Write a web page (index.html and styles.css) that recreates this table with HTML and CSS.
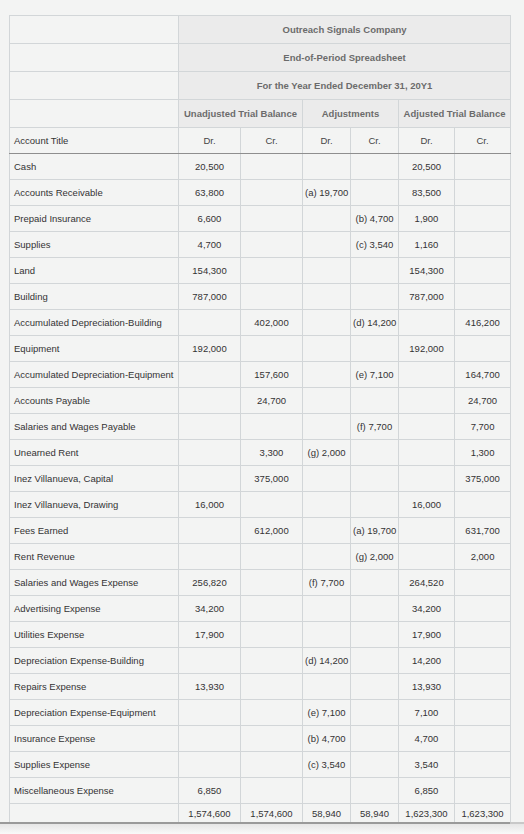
FILE: index.html
```html
<!DOCTYPE html>
<html>
<head>
<meta charset="utf-8">
<link rel="stylesheet" href="styles.css">
</head>
<body>
<div class="wrap">
<table class="sheet">
<colgroup>
<col class="c-title"><col class="c-tb"><col class="c-tb"><col class="c-adj"><col class="c-adj"><col class="c-atb"><col class="c-atb">
</colgroup>
<thead>
<tr class="hrow"><td class="blank"></td><td class="hcell co" colspan="6">Outreach Signals Company</td></tr>
<tr class="hrow"><td class="blank"></td><td class="hcell co" colspan="6">End-of-Period Spreadsheet</td></tr>
<tr class="hrow"><td class="blank"></td><td class="hcell co" colspan="6">For the Year Ended December 31, 20Y1</td></tr>
<tr class="hrow"><td class="blank"></td><td class="hcell grp" colspan="2">Unadjusted Trial Balance</td><td class="hcell grp" colspan="2">Adjustments</td><td class="hcell grp" colspan="2">Adjusted Trial Balance</td></tr>
<tr class="colrow"><td class="title">Account Title</td><td>Dr.</td><td>Cr.</td><td>Dr.</td><td>Cr.</td><td>Dr.</td><td>Cr.</td></tr>
</thead>
<tbody>
<tr><td class="title">Cash</td><td>20,500</td><td></td><td></td><td></td><td>20,500</td><td></td></tr>
<tr><td class="title">Accounts Receivable</td><td>63,800</td><td></td><td>(a) 19,700</td><td></td><td>83,500</td><td></td></tr>
<tr><td class="title">Prepaid Insurance</td><td>6,600</td><td></td><td></td><td>(b) 4,700</td><td>1,900</td><td></td></tr>
<tr><td class="title">Supplies</td><td>4,700</td><td></td><td></td><td>(c) 3,540</td><td>1,160</td><td></td></tr>
<tr><td class="title">Land</td><td>154,300</td><td></td><td></td><td></td><td>154,300</td><td></td></tr>
<tr><td class="title">Building</td><td>787,000</td><td></td><td></td><td></td><td>787,000</td><td></td></tr>
<tr><td class="title">Accumulated Depreciation-Building</td><td></td><td>402,000</td><td></td><td>(d) 14,200</td><td></td><td>416,200</td></tr>
<tr><td class="title">Equipment</td><td>192,000</td><td></td><td></td><td></td><td>192,000</td><td></td></tr>
<tr><td class="title">Accumulated Depreciation-Equipment</td><td></td><td>157,600</td><td></td><td>(e) 7,100</td><td></td><td>164,700</td></tr>
<tr><td class="title">Accounts Payable</td><td></td><td>24,700</td><td></td><td></td><td></td><td>24,700</td></tr>
<tr><td class="title">Salaries and Wages Payable</td><td></td><td></td><td></td><td>(f) 7,700</td><td></td><td>7,700</td></tr>
<tr><td class="title">Unearned Rent</td><td></td><td>3,300</td><td>(g) 2,000</td><td></td><td></td><td>1,300</td></tr>
<tr><td class="title">Inez Villanueva, Capital</td><td></td><td>375,000</td><td></td><td></td><td></td><td>375,000</td></tr>
<tr><td class="title">Inez Villanueva, Drawing</td><td>16,000</td><td></td><td></td><td></td><td>16,000</td><td></td></tr>
<tr><td class="title">Fees Earned</td><td></td><td>612,000</td><td></td><td>(a) 19,700</td><td></td><td>631,700</td></tr>
<tr><td class="title">Rent Revenue</td><td></td><td></td><td></td><td>(g) 2,000</td><td></td><td>2,000</td></tr>
<tr><td class="title">Salaries and Wages Expense</td><td>256,820</td><td></td><td>(f) 7,700</td><td></td><td>264,520</td><td></td></tr>
<tr><td class="title">Advertising Expense</td><td>34,200</td><td></td><td></td><td></td><td>34,200</td><td></td></tr>
<tr><td class="title">Utilities Expense</td><td>17,900</td><td></td><td></td><td></td><td>17,900</td><td></td></tr>
<tr><td class="title">Depreciation Expense-Building</td><td></td><td></td><td>(d) 14,200</td><td></td><td>14,200</td><td></td></tr>
<tr><td class="title">Repairs Expense</td><td>13,930</td><td></td><td></td><td></td><td>13,930</td><td></td></tr>
<tr><td class="title">Depreciation Expense-Equipment</td><td></td><td></td><td>(e) 7,100</td><td></td><td>7,100</td><td></td></tr>
<tr><td class="title">Insurance Expense</td><td></td><td></td><td>(b) 4,700</td><td></td><td>4,700</td><td></td></tr>
<tr><td class="title">Supplies Expense</td><td></td><td></td><td>(c) 3,540</td><td></td><td>3,540</td><td></td></tr>
<tr><td class="title">Miscellaneous Expense</td><td>6,850</td><td></td><td></td><td></td><td>6,850</td><td></td></tr>
</tbody>
<tfoot>
<tr class="total"><td class="title"></td><td>1,574,600</td><td>1,574,600</td><td>58,940</td><td>58,940</td><td>1,623,300</td><td>1,623,300</td></tr>
</tfoot>
</table>
</div>
<div class="scrollbar"><div class="bar"></div></div>
</body>
</html>
```

FILE: styles.css
```css
html, body {
  margin: 0;
  padding: 0;
  background: #f3f4f3;
}
body {
  font-family: "Liberation Sans", Arial, sans-serif;
  height: 834px;
  overflow: hidden;
}
.wrap {
  padding: 15px 0 0 9px;
}
.sheet {
  border-collapse: collapse;
  table-layout: fixed;
  width: 502px;
  font-size: 9.5px;
  color: #333;
}
.c-title { width: 169px; }
.c-tb { width: 62px; }
.c-adj { width: 48px; }
.c-atb { width: 56px; }
.sheet td {
  border: 1px solid #d2d6d8;
  padding: 0 2px;
  text-align: center;
  white-space: nowrap;
  overflow: hidden;
  height: 25px;
  background: #f3f4f3;
}
.sheet .hrow td {
  height: 27px;
}
.sheet .hcell {
  background: #ebebeb;
  color: #6b6b6b;
  font-weight: bold;
}
.sheet .colrow td {
  color: #444;
}
.sheet thead tr.colrow td {
  border-bottom: 1px solid #8e8e8e;
}
.sheet td.title {
  text-align: left;
  padding-left: 4px;
  color: #333;
}
.sheet tfoot .total td {
  height: 18px;
  border-top: 1px solid #999;
  border-bottom: none;
}
.scrollbar {
  height: 11px;
  background: linear-gradient(#e6e6e6, #fbfbfb);
  border-top: 2px solid #c8c8c8;
}
.scrollbar .bar {
  width: 510px;
  height: 2px;
  margin-top: -2px;
  background: #9a9a9a;
}
```
